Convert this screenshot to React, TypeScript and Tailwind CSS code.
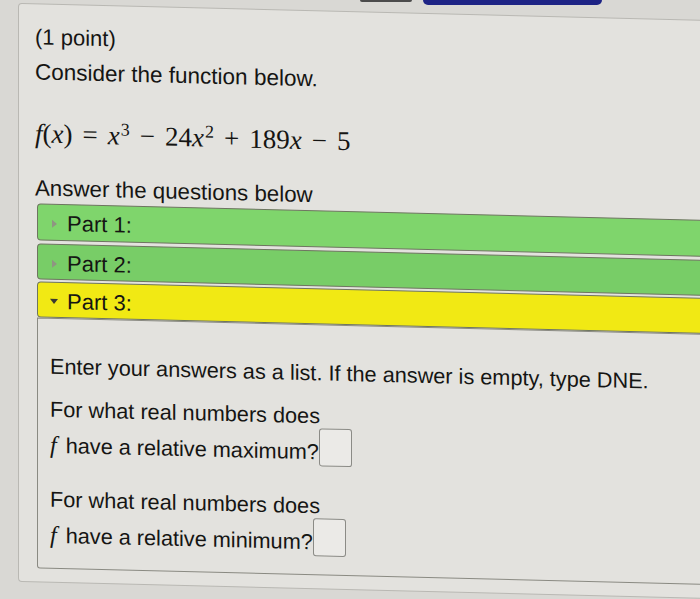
import React from "react";

function RightTri() {
  return <div className="w-0 h-0 border-y-[4px] border-y-transparent border-l-[5px] border-l-[#8f9582]" />;
}
function DownTri() {
  return <div className="w-0 h-0 border-x-[4px] border-x-transparent border-t-[5px] border-t-[#3a3a30]" />;
}

function Bar({ label, open, color, h }: { label: string; open?: boolean; color: string; h: string }) {
  return (
    <div className={`flex items-center ${h} ${color} border-[1.5px] border-[#6e7560] rounded-l-[4px] pl-[12px] pt-[3px]`}>
      <div className="w-[8px] flex justify-center">{open ? <DownTri /> : <RightTri />}</div>
      <span className="ml-[9px] text-[22px] leading-[26px]">{label}</span>
    </div>
  );
}

function AnswerBox() {
  return <div className="w-[33px] h-[38px] shrink-0 border-[1.5px] border-[#8b8b86] rounded-[3px] bg-[#ebeae7]" />;
}

export default function App() {
  const serif = "font-['Liberation_Serif','Times_New_Roman',serif]";
  return (
    <div className="w-[700px] h-[599px] overflow-hidden bg-[#d9d8d4] font-['Liberation_Sans',Arial,sans-serif] text-[#151513]">
      <div className="flex h-[3px]">
        <div className="ml-[360px] w-[52px] h-[2px] bg-[#4b4b4b] rounded-b-[2px]" />
        <div className="ml-[11px] w-[179px] h-[5px] bg-[#1d2385] rounded-b-[6px]" />
      </div>
      <div className="ml-[18px] w-[720px] origin-top-left skew-y-[1.4deg] border border-[#b9b8b3] rounded-[4px] bg-[#e3e2de] pl-[16px] pt-[20px] pb-[13px]">
        <div className="text-[22px] leading-[26px]">(1 point)</div>
        <div className="mt-[9px] text-[22.5px] leading-[26px]">Consider the function below.</div>
        <div className={`mt-[32px] ${serif} text-[27px] leading-[32px] whitespace-nowrap`}>
          <i>f</i>(<i>x</i>)<span className="mx-[10px]">=</span>
          <i>x</i>
          <sup className="text-[18px] ml-[1px]">3</sup>
          <span className="mx-[10px]">−</span>24<i>x</i>
          <sup className="text-[18px] ml-[1px]">2</sup>
          <span className="mx-[10px]">+</span>189<i>x</i>
          <span className="mx-[10px]">−</span>5
        </div>
        <div className="mt-[26px] text-[22.3px] leading-[26px]">Answer the questions below</div>
        <div className="mt-[2px] ml-[2px] flex flex-col">
          <Bar label="Part 1:" color="bg-[#7fd56c]" h="h-[37px]" />
          <div className="mt-[3px]">
            <Bar label="Part 2:" color="bg-[#78cd67]" h="h-[36px]" />
          </div>
          <div className="mt-[2px]">
            <Bar label="Part 3:" open color="bg-[#f1e914]" h="h-[36px]" />
          </div>
          <div className="border-[1.5px] border-[#8a8a82] rounded-bl-[3px] pl-[12px] pt-[36px] pb-[18px] text-[21.7px] leading-[24px]">
            <div>Enter your answers as a list. If the answer is empty, type DNE.</div>
            <div className="mt-[19px]">For what real numbers does</div>
            <div className="flex items-end h-[38px]">
              <span className="pb-[2px] whitespace-nowrap">
                <i className={`${serif} text-[24px] mr-[3px]`}>f</i> have a relative maximum?
              </span>
              <AnswerBox />
            </div>
            <div className="mt-[28px]">For what real numbers does</div>
            <div className="flex items-end h-[38px]">
              <span className="pb-[2px] whitespace-nowrap">
                <i className={`${serif} text-[24px] mr-[3px]`}>f</i> have a relative minimum?
              </span>
              <AnswerBox />
            </div>
          </div>
        </div>
      </div>
    </div>
  );
}
